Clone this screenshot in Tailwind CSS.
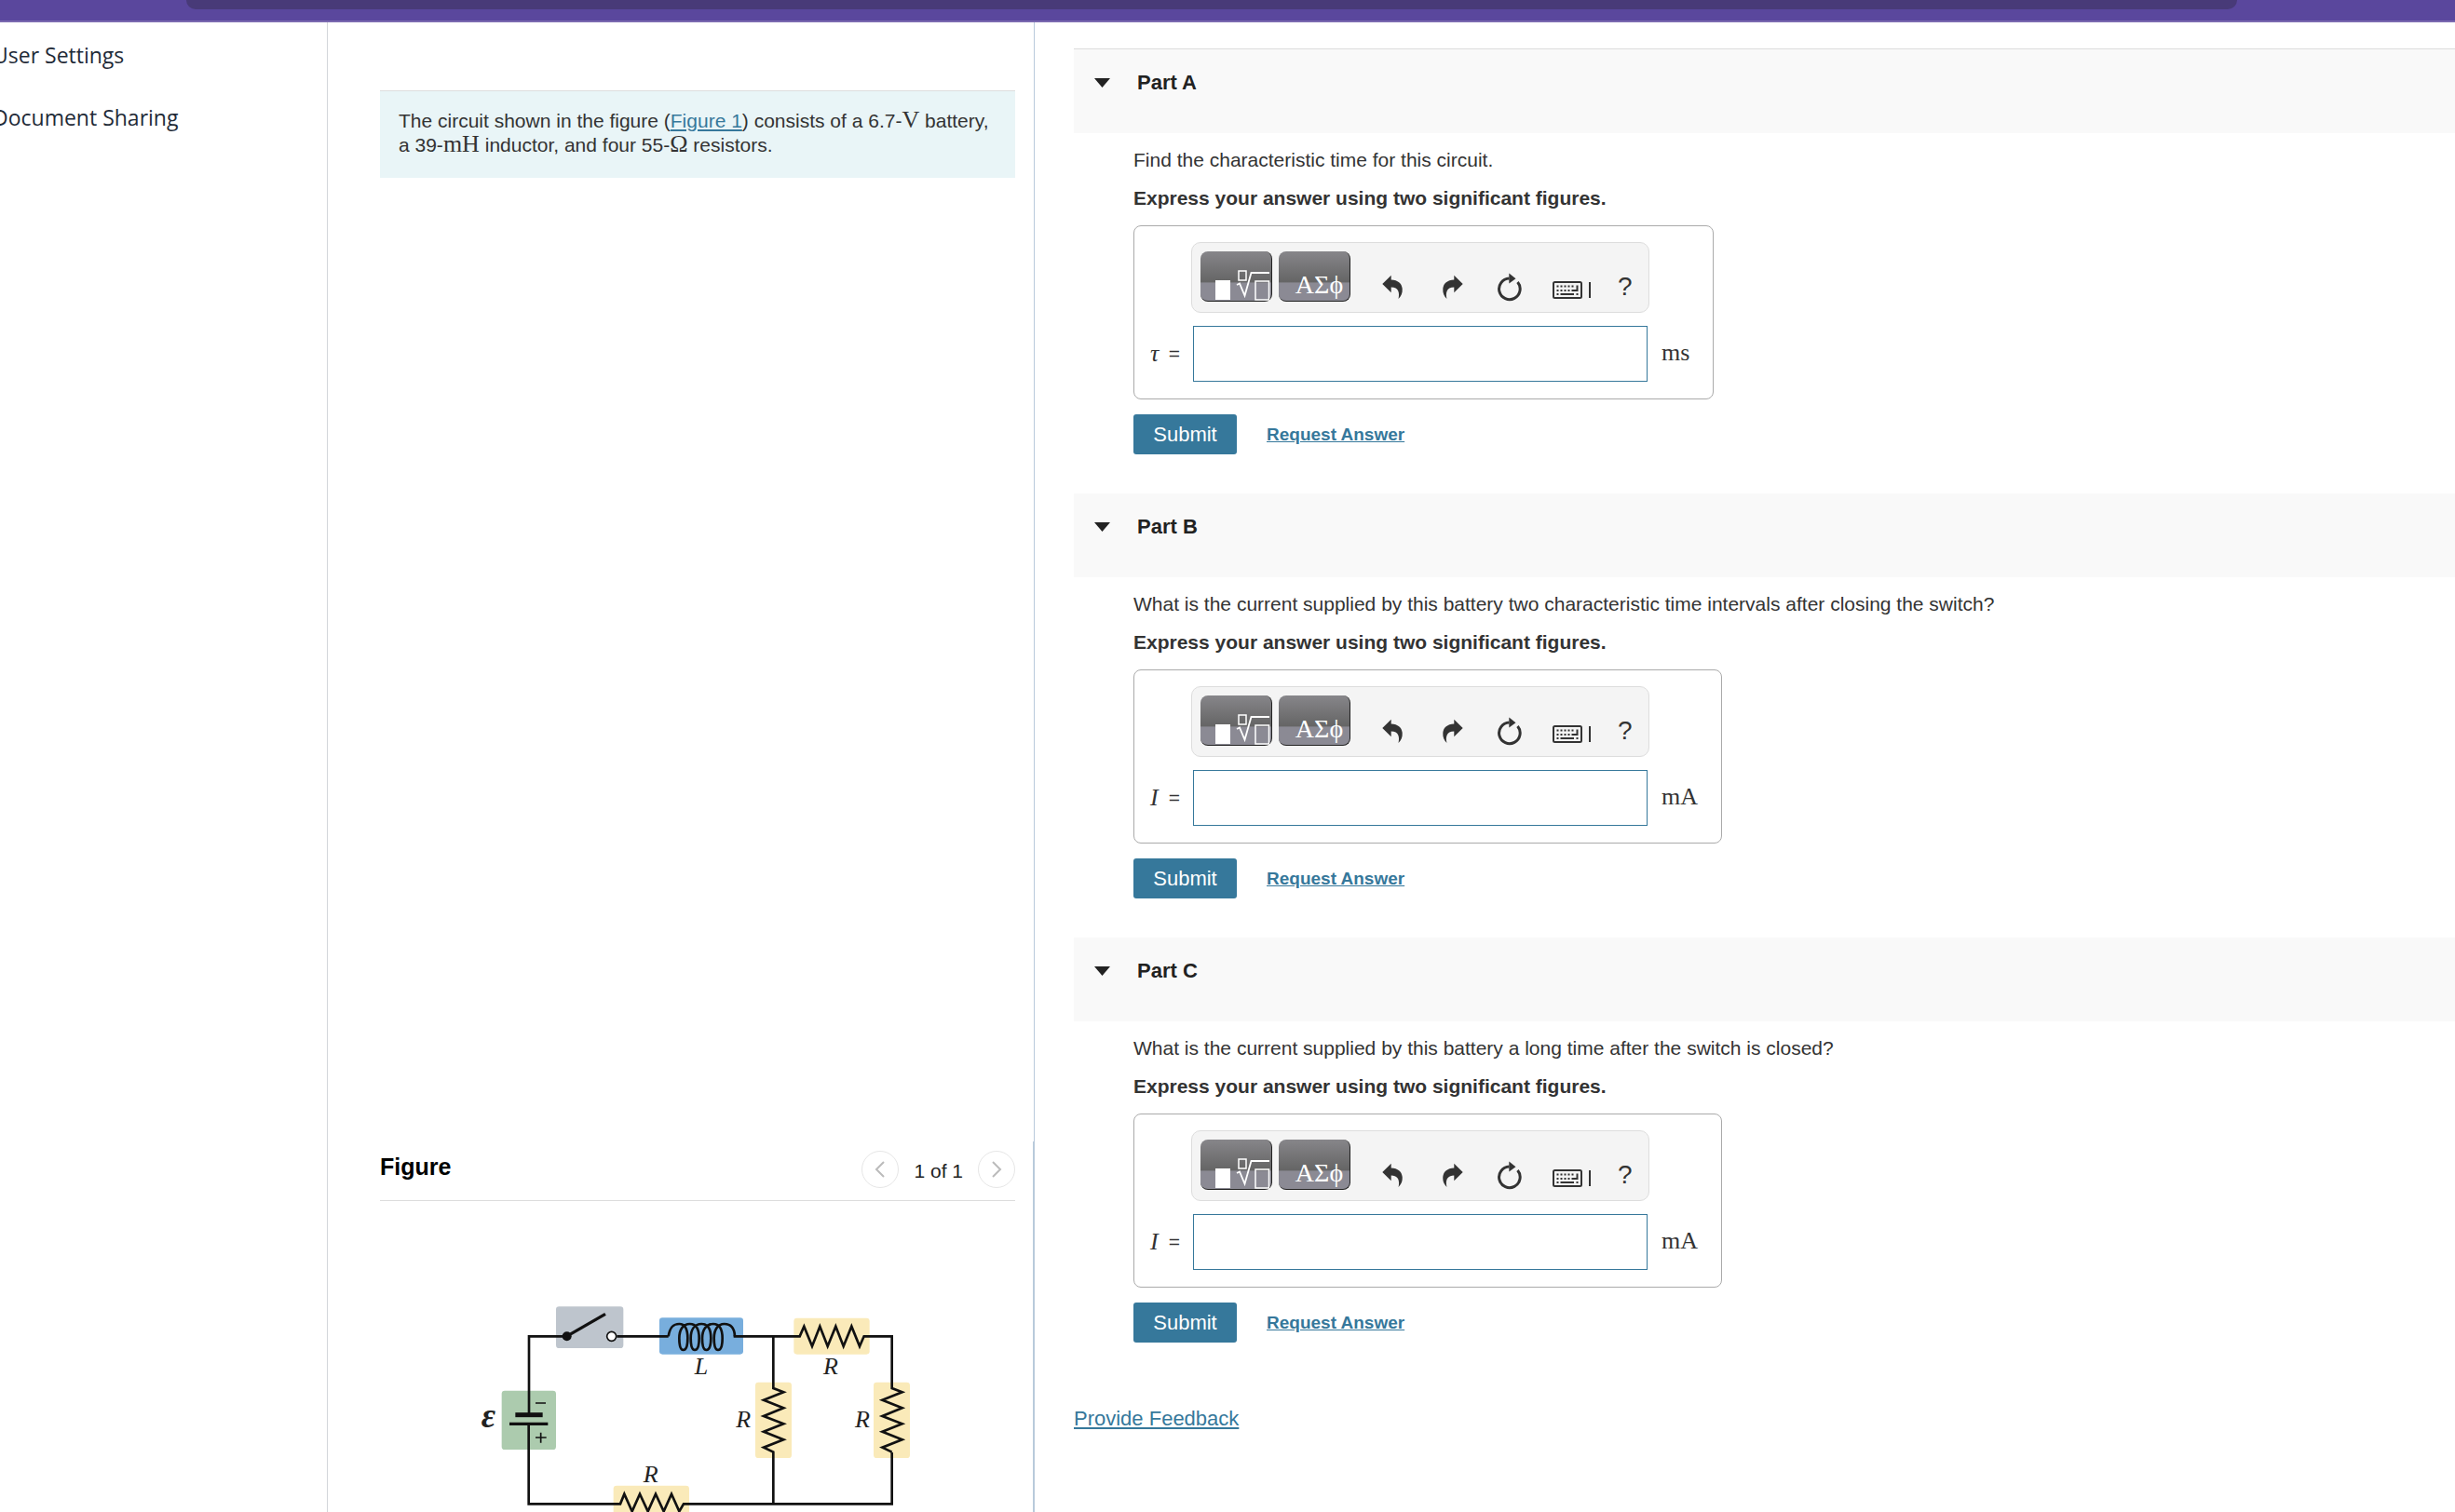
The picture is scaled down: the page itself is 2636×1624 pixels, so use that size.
<!DOCTYPE html>
<html lang="en">
<head>
<meta charset="utf-8">
<title>RL Circuit Problem</title>
<script src="https://cdn.jsdelivr.net/npm/@tailwindcss/browser@4"></script>
</head>
<body class="bg-white text-[#333] font-['Liberation_Sans',Arial,sans-serif] text-[21px] leading-[26px]">
<svg class="hidden" aria-hidden="true">
  <symbol id="templates" viewBox="0 0 77 54">
    <rect x="16" y="31" width="12" height="21" fill="#fff"/>
    <rect x="41" y="21" width="8" height="10" fill="none" stroke="#fff" stroke-width="1.5"/>
    <path d="M39 36l3-1.500 5.500 13L54.500 23H74" fill="none" stroke="#fff" stroke-width="1.800"/>
    <rect x="16" y="31" width="16" height="21" fill="#fff"/>
    <rect x="59" y="32" width="14.500" height="20" fill="none" stroke="#fff" stroke-width="1.500"/>
  </symbol>
  <symbol id="undo" viewBox="0 0 24 54">
    <path d="M1.300 35L10.700 25.700V30.500C18 31 22 34 22.700 40C23 45 21.500 48 18.500 51C20 45 19 38.500 10.700 38.500V44.300Z" fill="#333"/>
  </symbol>
  <symbol id="redo" viewBox="0 0 24 54">
    <path d="M22.700 35L13.300 25.700V30.500C6 31 2 34 1.300 40C1 45 2.500 48 5.500 51C4 45 5 38.500 13.300 38.500V44.300Z" fill="#333"/>
  </symbol>
  <symbol id="reset" viewBox="0 0 28 54">
    <path d="M13.500 29A11.300 11.300 0 1 0 22.500 33" fill="none" stroke="#333" stroke-width="3"/>
    <path d="M13.300 23.500L20.500 29.300L13.300 34.500Z" fill="#333"/>
  </symbol>
  <symbol id="keyboard" viewBox="0 0 43 54">
    <rect x="2" y="33" width="30" height="17" rx="1.500" fill="none" stroke="#333" stroke-width="2"/>
    <path d="M5.500 37.500H25M5.500 42H24" stroke="#333" stroke-width="2" stroke-dasharray="2 2"/>
    <path d="M27.500 36.500V42H23M9.500 46H24M5.500 46h2M26.500 46h2" fill="none" stroke="#333" stroke-width="2"/>
    <path d="M41 33V50" stroke="#333" stroke-width="2"/>
  </symbol>
</svg>
<div class="flex h-screen flex-col overflow-hidden">
  <div class="h-6 shrink-0 border-b-2 border-[#7b69b0] bg-[#5a479d] pl-[200px] pr-[234px]">
    <div class="h-[10px] rounded-b-[28px] bg-[#483a78]"></div>
  </div>
  <div class="flex min-h-0 flex-1">
    <nav class="flex w-[352px] shrink-0 flex-col gap-[35px] overflow-hidden border-r border-[#d3d6da] pt-[19px] font-['Open_Sans',sans-serif] text-[23px] leading-8 text-[#1f2b38]">
      <a href="#" class="-ml-2">User Settings</a>
      <a href="#" class="-ml-2">Document Sharing</a>
    </nav>

    <div class="flex w-[759px] shrink-0 flex-col">
      <div class="flex-1 border-r border-[#b9cadb] pl-14 pr-5 pt-[73px]">
        <p class="whitespace-nowrap border-t border-[#ddd] bg-[#e9f5f7] px-5 pb-[22px] pt-[19px]">The circuit shown in the figure (<a href="#figure" class="text-[#36789b] underline decoration-2 underline-offset-2">Figure 1</a>) consists of a 6.7-<span class="font-['Liberation_Serif',serif] text-[26px] leading-5">V</span> battery,<br>a 39-<span class="font-['Liberation_Serif',serif] text-[26px] leading-5">mH</span> inductor, and four 55-<span class="font-['Liberation_Serif',serif] text-[26px] leading-5">Ω</span> resistors.</p>
      </div>
      <section id="figure" class="h-[398px] shrink-0 overflow-hidden border-r-2 border-[#b9cadb] pl-14 pr-[19px]">
        <div class="flex h-16 items-start justify-between border-b border-[#ddd] pt-[10px]">
          <h2 class="pt-1 text-[25px] font-bold text-black">Figure</h2>
          <div class="flex items-center gap-[16px] text-[#222]">
            <button aria-label="Previous figure" class="flex size-10 items-center justify-center rounded-full border border-[#e6e6e6]">
              <svg class="h-5 w-3" viewBox="0 0 12 20" fill="none" stroke="#bbb" stroke-width="2"><path d="M10 2L2 10l8 8"/></svg>
            </button>
            <span class="pt-1">1 of 1</span>
            <button aria-label="Next figure" class="flex size-10 items-center justify-center rounded-full border border-[#e6e6e6]">
              <svg class="h-5 w-3" viewBox="0 0 12 20" fill="none" stroke="#bbb" stroke-width="2"><path d="M2 2l8 8-8 8"/></svg>
            </button>
          </div>
        </div>
        <svg class="ml-[92px] mt-[90px] h-[270px] w-[520px]" viewBox="0 0 1560 810" role="img" aria-label="Circuit with a switch, battery, inductor and four resistors">
          <g>
            <rect x="291" y="70" width="217" height="134" rx="10" fill="#bec5cd"/>
            <rect x="624" y="106" width="270" height="118" rx="10" fill="#78aedd"/>
            <rect x="1057" y="107" width="244" height="117" rx="10" fill="#faeab9"/>
            <rect x="933" y="314" width="117" height="244" rx="10" fill="#faeab9"/>
            <rect x="1314" y="314" width="117" height="244" rx="10" fill="#faeab9"/>
            <rect x="476" y="647" width="244" height="117" rx="10" fill="#faeab9"/>
            <rect x="116" y="341" width="175" height="190" rx="10" fill="#accbae"/>
          </g>
          <g fill="none" stroke="#111" stroke-width="8">
            <path d="M325 166H204V415M203 450V706H498l13-32 25 56 25-56 26 56 25-56 26 56 25-56 25 56 14-24H1373V540"/>
            <path d="M487 166H653M863 166H1076l14-32 26 64 25-64 25 64 26-64 25 64 26-64 26 64 14-32H1373V333l33 13-64 25 64 26-64 26 64 25-64 25 64 26-64 25 31 15"/>
            <path d="M991 166V333l33 13-64 25 64 26-64 26 64 25-64 25 64 26-64 25 31 15V706"/>
            <path d="M653 166C658 134 670 126 688 126C712 126 715 150 715 172C715 195 710 210 701 210C690 210 688 190 688 172C688 145 700 126 722 126C748 126 752 150 752 172C752 195 748 210 738 210C728 210 725 190 725 172C725 145 737 126 760 126C785 126 790 150 790 172C790 195 785 210 775 210C765 210 762 190 762 172C762 145 775 126 797 126C822 126 827 150 827 172C827 195 822 210 813 210C802 210 800 190 800 172C800 145 812 126 833 126C855 126 866 140 867 166"/>
            <path d="M325 166L450 94" stroke-width="10"/>
            <path d="M141 448H265" stroke-width="10"/>
            <path d="M160 419H248" stroke-width="15"/>
            <path d="M225 381H258M225 492H260M242 476V509" stroke-width="5"/>
          </g>
          <circle cx="326" cy="166" r="15" fill="#111"/>
          <circle cx="470" cy="166" r="15" fill="#fff" stroke="#111" stroke-width="5"/>
          <g class="font-['Liberation_Serif',serif] italic" font-size="78" fill="#222">
            <text x="737" y="288">L</text>
            <text x="1152" y="288">R</text>
            <text x="871" y="460">R</text>
            <text x="1254" y="460">R</text>
            <text x="572" y="636">R</text>
            <text x="50" y="460" font-size="112" font-weight="bold">ε</text>
          </g>
        </svg>
      </section>
    </div>

    <main class="min-w-0 flex-1 pl-[42px] pt-7">
      <section class="pb-[41px]">
        <h2 class="flex h-[91px] items-start gap-[29px] border-t border-[#ddd] bg-[#f9f9f9] pl-[22px] pt-[23px] text-[22px] font-bold text-[#222]">
          <svg class="mt-2 h-[10px] w-[17px]" viewBox="0 0 17 10" fill="#222"><path d="M0 0H17L8.500 10Z"/></svg>Part A</h2>
        <div class="pl-16 pt-4">
          <p>Find the characteristic time for this circuit.</p>
          <p class="pt-[15px] font-bold">Express your answer using two significant figures.</p>
          <div class="mt-4 grid w-fit grid-cols-[44px_492px_auto] gap-y-[14px] rounded-lg border border-[#aaa] pb-[18px] pl-[17px] pr-[25px] pt-[17px]">
            <div class="col-start-2 flex h-[76px] items-start rounded-[10px] border border-[#ddd] bg-[#f4f4f4] pl-[9px] pt-[9px]">
              <button aria-label="Templates" class="h-[54px] w-[77px] rounded-lg border-b border-r border-[#222] bg-linear-to-b from-[#87868a] from-0% via-[#656565] via-62% to-[#8b8a94] to-64%"><svg class="h-[54px] w-[77px]"><use href="#templates"/></svg></button>
              <button class="ml-[7px] h-[54px] w-[77px] rounded-lg border-b border-r border-[#222] bg-linear-to-b from-[#87868a] from-0% via-[#656565] via-62% to-[#8b8a94] to-64% pl-[11px] pt-[18px] font-['Liberation_Serif',serif] text-[28px] text-white">ΑΣϕ</button>
              <button aria-label="Undo" class="ml-[33px]"><svg class="h-[54px] w-6"><use href="#undo"/></svg></button>
              <button aria-label="Redo" class="ml-[41px]"><svg class="h-[54px] w-6"><use href="#redo"/></svg></button>
              <button aria-label="Reset" class="ml-[35px]"><svg class="h-[54px] w-7"><use href="#reset"/></svg></button>
              <button aria-label="Keyboard shortcuts" class="ml-[31px]"><svg class="h-[54px] w-[43px]"><use href="#keyboard"/></svg></button>
              <button aria-label="Help" class="ml-[28px] pt-[22px] text-[28px] leading-8">?</button>
            </div>
            <label for="a" class="col-start-1 flex items-center justify-between pr-3"><span class="font-['Liberation_Serif',serif] text-[26px] italic">τ</span> =</label>
            <input id="a" class="mx-[2px] h-[60px] border border-[#36789b] px-3">
            <span class="flex items-center pb-[2px] pl-[13px] font-['Liberation_Serif',serif] text-[26px]">ms</span>
          </div>
          <div class="mt-4 flex items-center gap-8">
            <button class="h-[43px] w-[111px] rounded-[3px] bg-[#36789b] text-[22px] text-white">Submit</button>
            <a href="#" class="text-[19px] font-bold text-[#36789b] underline">Request Answer</a>
          </div>
        </div>
      </section>

      <section class="pb-[41px]">
        <h2 class="flex h-[91px] items-start gap-[29px] border-t border-white bg-[#f9f9f9] pl-[22px] pt-[23px] text-[22px] font-bold text-[#222]">
          <svg class="mt-2 h-[10px] w-[17px]" viewBox="0 0 17 10" fill="#222"><path d="M0 0H17L8.500 10Z"/></svg>Part B</h2>
        <div class="pl-16 pt-4">
          <p>What is the current supplied by this battery two characteristic time intervals after closing the switch?</p>
          <p class="pt-[15px] font-bold">Express your answer using two significant figures.</p>
          <div class="mt-4 grid w-fit grid-cols-[44px_492px_auto] gap-y-[14px] rounded-lg border border-[#aaa] pb-[18px] pl-[17px] pr-[25px] pt-[17px]">
            <div class="col-start-2 flex h-[76px] items-start rounded-[10px] border border-[#ddd] bg-[#f4f4f4] pl-[9px] pt-[9px]">
              <button aria-label="Templates" class="h-[54px] w-[77px] rounded-lg border-b border-r border-[#222] bg-linear-to-b from-[#87868a] from-0% via-[#656565] via-62% to-[#8b8a94] to-64%"><svg class="h-[54px] w-[77px]"><use href="#templates"/></svg></button>
              <button class="ml-[7px] h-[54px] w-[77px] rounded-lg border-b border-r border-[#222] bg-linear-to-b from-[#87868a] from-0% via-[#656565] via-62% to-[#8b8a94] to-64% pl-[11px] pt-[18px] font-['Liberation_Serif',serif] text-[28px] text-white">ΑΣϕ</button>
              <button aria-label="Undo" class="ml-[33px]"><svg class="h-[54px] w-6"><use href="#undo"/></svg></button>
              <button aria-label="Redo" class="ml-[41px]"><svg class="h-[54px] w-6"><use href="#redo"/></svg></button>
              <button aria-label="Reset" class="ml-[35px]"><svg class="h-[54px] w-7"><use href="#reset"/></svg></button>
              <button aria-label="Keyboard shortcuts" class="ml-[31px]"><svg class="h-[54px] w-[43px]"><use href="#keyboard"/></svg></button>
              <button aria-label="Help" class="ml-[28px] pt-[22px] text-[28px] leading-8">?</button>
            </div>
            <label for="b" class="col-start-1 flex items-center justify-between pr-3"><span class="font-['Liberation_Serif',serif] text-[26px] italic">I</span> =</label>
            <input id="b" class="mx-[2px] h-[60px] border border-[#36789b] px-3">
            <span class="flex items-center pb-[2px] pl-[13px] font-['Liberation_Serif',serif] text-[26px]">mA</span>
          </div>
          <div class="mt-4 flex items-center gap-8">
            <button class="h-[43px] w-[111px] rounded-[3px] bg-[#36789b] text-[22px] text-white">Submit</button>
            <a href="#" class="text-[19px] font-bold text-[#36789b] underline">Request Answer</a>
          </div>
        </div>
      </section>

      <section class="pb-[41px]">
        <h2 class="flex h-[91px] items-start gap-[29px] border-t border-white bg-[#f9f9f9] pl-[22px] pt-[23px] text-[22px] font-bold text-[#222]">
          <svg class="mt-2 h-[10px] w-[17px]" viewBox="0 0 17 10" fill="#222"><path d="M0 0H17L8.500 10Z"/></svg>Part C</h2>
        <div class="pl-16 pt-4">
          <p>What is the current supplied by this battery a long time after the switch is closed?</p>
          <p class="pt-[15px] font-bold">Express your answer using two significant figures.</p>
          <div class="mt-4 grid w-fit grid-cols-[44px_492px_auto] gap-y-[14px] rounded-lg border border-[#aaa] pb-[18px] pl-[17px] pr-[25px] pt-[17px]">
            <div class="col-start-2 flex h-[76px] items-start rounded-[10px] border border-[#ddd] bg-[#f4f4f4] pl-[9px] pt-[9px]">
              <button aria-label="Templates" class="h-[54px] w-[77px] rounded-lg border-b border-r border-[#222] bg-linear-to-b from-[#87868a] from-0% via-[#656565] via-62% to-[#8b8a94] to-64%"><svg class="h-[54px] w-[77px]"><use href="#templates"/></svg></button>
              <button class="ml-[7px] h-[54px] w-[77px] rounded-lg border-b border-r border-[#222] bg-linear-to-b from-[#87868a] from-0% via-[#656565] via-62% to-[#8b8a94] to-64% pl-[11px] pt-[18px] font-['Liberation_Serif',serif] text-[28px] text-white">ΑΣϕ</button>
              <button aria-label="Undo" class="ml-[33px]"><svg class="h-[54px] w-6"><use href="#undo"/></svg></button>
              <button aria-label="Redo" class="ml-[41px]"><svg class="h-[54px] w-6"><use href="#redo"/></svg></button>
              <button aria-label="Reset" class="ml-[35px]"><svg class="h-[54px] w-7"><use href="#reset"/></svg></button>
              <button aria-label="Keyboard shortcuts" class="ml-[31px]"><svg class="h-[54px] w-[43px]"><use href="#keyboard"/></svg></button>
              <button aria-label="Help" class="ml-[28px] pt-[22px] text-[28px] leading-8">?</button>
            </div>
            <label for="c" class="col-start-1 flex items-center justify-between pr-3"><span class="font-['Liberation_Serif',serif] text-[26px] italic">I</span> =</label>
            <input id="c" class="mx-[2px] h-[60px] border border-[#36789b] px-3">
            <span class="flex items-center pb-[2px] pl-[13px] font-['Liberation_Serif',serif] text-[26px]">mA</span>
          </div>
          <div class="mt-4 flex items-center gap-8">
            <button class="h-[43px] w-[111px] rounded-[3px] bg-[#36789b] text-[22px] text-white">Submit</button>
            <a href="#" class="text-[19px] font-bold text-[#36789b] underline">Request Answer</a>
          </div>
        </div>
      </section>

      <a href="#" class="mt-7 inline-block text-[22px] text-[#36789b] underline decoration-2 underline-offset-2">Provide Feedback</a>
    </main>
  </div>
</div>
</body>
</html>
